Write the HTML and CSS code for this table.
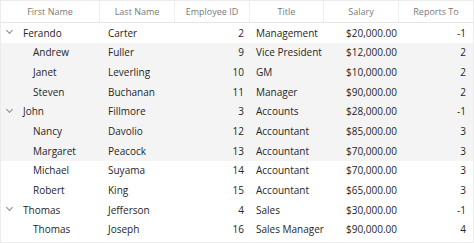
FILE: index.html
```html
<!DOCTYPE html>
<html lang="en">
<head>
    <meta charset="UTF-8">
    <title>Employees</title>
    <link rel="stylesheet" href="styles.css">
</head>
<body>
    <div class="grid">
        <div class="head">
            <div class="hcell">First Name</div>
            <div class="hcell">Last Name</div>
            <div class="hcell">Employee ID</div>
            <div class="hcell">Title</div>
            <div class="hcell">Salary</div>
            <div class="hcell">Reports To</div>
        </div>

        <div class="row parent">
            <div class="cell first"><span class="chev"></span>Ferando</div>
            <div class="cell last">Carter</div>
            <div class="cell num">2</div>
            <div class="cell title">Management</div>
            <div class="cell salary">$20,000.00</div>
            <div class="cell num rep">-1</div>
        </div>
        <div class="row child shaded">
            <div class="cell first">Andrew</div>
            <div class="cell last">Fuller</div>
            <div class="cell num">9</div>
            <div class="cell title">Vice President</div>
            <div class="cell salary">$12,000.00</div>
            <div class="cell num rep">2</div>
        </div>
        <div class="row child shaded">
            <div class="cell first">Janet</div>
            <div class="cell last">Leverling</div>
            <div class="cell num">10</div>
            <div class="cell title">GM</div>
            <div class="cell salary">$10,000.00</div>
            <div class="cell num rep">2</div>
        </div>
        <div class="row child shaded">
            <div class="cell first">Steven</div>
            <div class="cell last">Buchanan</div>
            <div class="cell num">11</div>
            <div class="cell title">Manager</div>
            <div class="cell salary">$90,000.00</div>
            <div class="cell num rep">2</div>
        </div>
        <div class="row parent shaded">
            <div class="cell first"><span class="chev"></span>John</div>
            <div class="cell last">Fillmore</div>
            <div class="cell num">3</div>
            <div class="cell title">Accounts</div>
            <div class="cell salary">$28,000.00</div>
            <div class="cell num rep">-1</div>
        </div>
        <div class="row child shaded">
            <div class="cell first">Nancy</div>
            <div class="cell last">Davolio</div>
            <div class="cell num">12</div>
            <div class="cell title">Accountant</div>
            <div class="cell salary">$85,000.00</div>
            <div class="cell num rep">3</div>
        </div>
        <div class="row child shaded">
            <div class="cell first">Margaret</div>
            <div class="cell last">Peacock</div>
            <div class="cell num">13</div>
            <div class="cell title">Accountant</div>
            <div class="cell salary">$70,000.00</div>
            <div class="cell num rep">3</div>
        </div>
        <div class="row child">
            <div class="cell first">Michael</div>
            <div class="cell last">Suyama</div>
            <div class="cell num">14</div>
            <div class="cell title">Accountant</div>
            <div class="cell salary">$70,000.00</div>
            <div class="cell num rep">3</div>
        </div>
        <div class="row child">
            <div class="cell first">Robert</div>
            <div class="cell last">King</div>
            <div class="cell num">15</div>
            <div class="cell title">Accountant</div>
            <div class="cell salary">$65,000.00</div>
            <div class="cell num rep">3</div>
        </div>
        <div class="row parent">
            <div class="cell first"><span class="chev"></span>Thomas</div>
            <div class="cell last">Jefferson</div>
            <div class="cell num">4</div>
            <div class="cell title">Sales</div>
            <div class="cell salary">$30,000.00</div>
            <div class="cell num rep">-1</div>
        </div>
        <div class="row child">
            <div class="cell first">Thomas</div>
            <div class="cell last">Joseph</div>
            <div class="cell num">16</div>
            <div class="cell title">Sales Manager</div>
            <div class="cell salary">$90,000.00</div>
            <div class="cell num rep">4</div>
        </div>
    </div>
</body>
</html>
```

FILE: styles.css
```css
body, html {
    margin: 0; padding: 0; background: #fff;
    font-family: 'Open Sans', 'Noto Sans', sans-serif;
}
.grid {
    width: 474px; height: 243px; box-sizing: border-box;
    border: 1px solid #ececec; overflow: hidden;
}
.head, .row {
    display: grid;
    grid-template-columns: 98px 75px 75px 74px 75px 1fr;
}
.head {
    height: 21px;
    border-bottom: 1px solid #e6e6e6;
}
.hcell {
    display: flex; align-items: center; justify-content: center;
    font-size: 9px; color: #7a7a7a;
    border-left: 1px solid #eeeeee;
}
.hcell:first-child {
    border-left: none;
}
.row {
    height: 19.66px;
    font-size: 10px; color: #262626;
}
.row.shaded {
    background: #f4f4f4;
}
.cell {
    display: flex; align-items: center;
    white-space: nowrap;
}
.cell.first {
    padding-left: 21px;
}
.row.child .cell.first {
    padding-left: 32px;
}
.chev {
    width: 4px; height: 4px; margin-left: -15px; margin-right: 11px; margin-top: -4px;
    border-right: 1px solid #8a8a8a; border-bottom: 1px solid #8a8a8a;
    transform: rotate(45deg);
}
.cell.last {
    padding-left: 9px;
}
.cell.num {
    justify-content: flex-end; padding-right: 5px;
}
.cell.title {
    padding-left: 7px;
}
.cell.salary {
    padding-left: 23px;
}
.cell.rep {
    padding-right: 7px;
}
```
